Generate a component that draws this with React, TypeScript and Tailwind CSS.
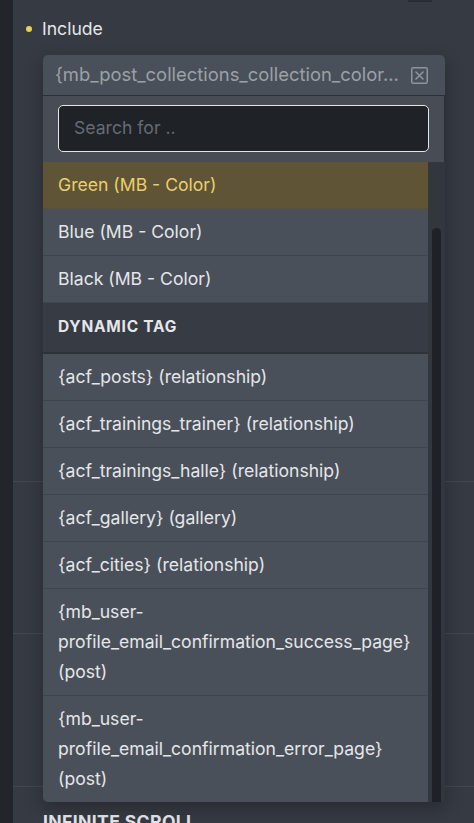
import React from 'react';

const font = { fontFamily: 'Inter, "Noto Sans", sans-serif' };

const colorOptions = ['Green (MB - Color)', 'Blue (MB - Color)', 'Black (MB - Color)'];

const tagOptions = [
  '{acf_posts} (relationship)',
  '{acf_trainings_trainer} (relationship)',
  '{acf_trainings_halle} (relationship)',
  '{acf_gallery} (gallery)',
  '{acf_cities} (relationship)',
  '{mb_user-profile_email_confirmation_success_page} (post)',
  '{mb_user-profile_email_confirmation_error_page} (post)',
];

const ClearIcon = () => (
  <svg width="17" height="17" viewBox="0 0 17 17" fill="none" className="shrink-0">
    <rect x="0.75" y="0.75" width="15.5" height="15.5" rx="1.5" stroke="#8e949c" strokeWidth="1.5" />
    <path d="M5 5l7 7M12 5l-7 7" stroke="#8e949c" strokeWidth="1.6" strokeLinecap="round" />
  </svg>
);

export default function App() {
  return (
    <div className="flex min-h-screen w-full overflow-hidden text-[17.6px]" style={font}>
      <div className="w-[13px] shrink-0 bg-[#22252a]" />
      <div className="relative flex-1 min-w-0 bg-[#363a42] min-h-[823px]">
        {/* bits of the panel hidden behind the dropdown */}
        <div className="absolute left-[395px] top-0 h-[2px] w-[24px] bg-[#2a2d33]" />
        <div className="absolute left-0 right-0 top-[481px] h-px bg-[#434850]" />
        <div className="absolute left-0 right-0 top-[633px] h-px bg-[#434850]" />
        <div className="absolute left-0 right-0 top-[786px] h-px bg-[#434850]" />

        <div className="relative flex flex-col pl-[30px]">
          <div className="flex items-center gap-[10px] pt-[17px] pb-[14px] -ml-[17px] leading-[24px] text-[#e4e6ea]">
            <span className="h-[6px] w-[6px] rounded-full bg-[#f0cf4f]" />
            <span>Include</span>
          </div>

          <div className="relative z-10 w-[402px] shadow-[0_6px_18px_rgba(0,0,0,0.28)] rounded-[4px]">
            <div className="flex h-[40px] items-center gap-2 rounded-t-[5px] bg-[#4a5059] pl-[12px] pr-[17px]">
              <span className="min-w-0 flex-1 whitespace-nowrap text-[18.4px] text-[#9aa0a8]">
                {'{mb_post_collections_collection_color...'}
              </span>
              <ClearIcon />
            </div>

            <div className="border-t border-r border-[#2d3137] bg-[#474c55] pl-[15px] pr-[15px] pt-[9px] pb-[10px]">
              <div className="flex h-[47px] items-center rounded-[5px] border-[1.5px] border-[#e2e4e8] bg-[#1f2226] px-[15px] text-[#666b74]">
                Search for ..
              </div>
            </div>

            <div className="flex">
              <div className="flex w-[385px] flex-col overflow-hidden rounded-bl-[5px]">
                {colorOptions.map((o, i) => (
                  <div
                    key={o}
                    className={
                      i === 0
                        ? 'border-b border-[#5a5236] bg-[#5f5536] px-[15px] py-[8px] leading-[30px] text-[#ead06a]'
                        : 'border-b border-[#40454d] bg-[#4a5059] px-[15px] py-[8px] leading-[30px] text-[#e4e6ea]'
                    }
                  >
                    {o}
                  </div>
                ))}
                <div className="border-b-2 border-[#2f3339] bg-[#373b43] px-[15px] pt-[9px] pb-[10px] text-[15.5px] font-bold leading-[30px] tracking-[0.05em] text-[#e4e6ea]">
                  DYNAMIC TAG
                </div>
                {tagOptions.map((o, i) => (
                  <div
                    key={o}
                    className={
                      i === tagOptions.length - 1
                        ? 'bg-[#4a5059] px-[15px] py-[8px] leading-[30px] text-[#e4e6ea] break-words'
                        : 'border-b border-[#40454d] bg-[#4a5059] px-[15px] py-[8px] leading-[30px] text-[#e4e6ea] break-words'
                    }
                  >
                    {o}
                  </div>
                ))}
              </div>
              <div className="flex w-[17px] flex-col bg-[#32363d] pt-[66px] pl-[4px] pr-[4px]">
                <div className="flex-1 rounded-t-full rounded-b-[3px] bg-[#1e2127]" />
              </div>
            </div>
          </div>

          <div className="pt-[8px] font-bold uppercase leading-[24px] tracking-[0.02em] text-[#e4e6ea]">
            Infinite scroll
          </div>
        </div>
      </div>
    </div>
  );
}
